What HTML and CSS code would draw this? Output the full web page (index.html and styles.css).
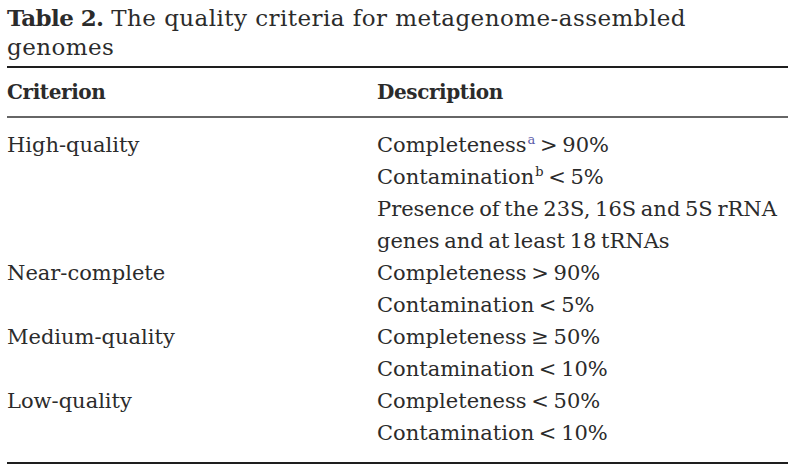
FILE: index.html
```html
<!DOCTYPE html>
<html lang="en">
<head>
<meta charset="utf-8">
<title>Table 2</title>
<link rel="stylesheet" href="styles.css">
</head>
<body>
<div class="table-wrap">
  <p class="caption"><b class="caption-label">Table 2.</b> The quality criteria for metagenome-assembled<br>genomes</p>
  <div class="table">
    <div class="head">
      <div class="cell">Criterion</div>
      <div class="cell">Description</div>
    </div>
    <div class="body">
      <div class="row">
        <div class="cell">High-quality</div>
        <div class="cell">
          <div class="line">Completeness<sup class="ref">a</sup> &gt; 90%</div>
          <div class="line">Contamination<sup class="ref ref-b">b</sup> &lt; 5%</div>
          <div class="line">Presence of the 23S, 16S and 5S rRNA</div>
          <div class="line">genes and at least 18 tRNAs</div>
        </div>
      </div>
      <div class="row">
        <div class="cell">Near-complete</div>
        <div class="cell">
          <div class="line">Completeness &gt; 90%</div>
          <div class="line">Contamination &lt; 5%</div>
        </div>
      </div>
      <div class="row">
        <div class="cell">Medium-quality</div>
        <div class="cell">
          <div class="line">Completeness &ge; 50%</div>
          <div class="line">Contamination &lt; 10%</div>
        </div>
      </div>
      <div class="row">
        <div class="cell">Low-quality</div>
        <div class="cell">
          <div class="line">Completeness &lt; 50%</div>
          <div class="line">Contamination &lt; 10%</div>
        </div>
      </div>
    </div>
  </div>
</div>
</body>
</html>
```

FILE: styles.css
```css
html, body {
  margin: 0;
  padding: 0;
  background: #ffffff;
}

body {
  font-family: "DejaVu Serif", "Liberation Serif", serif;
  color: #2b2b2b;
}

.table-wrap {
  width: 781px;
  padding: 3px 0 0 7px;
}

.caption {
  margin: 0 0 4px 0;
  font-size: 23px;
  letter-spacing: 0.45px;
  line-height: 29px;
}

.caption-label {
  font-weight: 700;
  letter-spacing: -0.6px;
}

.table {
  border-top: 2px solid #1e1e1e;
  border-bottom: 2px solid #1e1e1e;
}

.head {
  display: grid;
  grid-template-columns: 370px 1fr;
  padding: 8px 0 8px 0;
  border-bottom: 2px solid #666666;
  font-size: 20px;
  letter-spacing: -0.4px;
  line-height: 32px;
  font-weight: 700;
}

.body {
  padding: 11px 0 13px 0;
  font-size: 21px;
  line-height: 32px;
}

.row {
  display: grid;
  grid-template-columns: 370px 1fr;
}

.line {
  white-space: nowrap;
  word-spacing: -2px;
}

.ref {
  font-size: 13px;
  line-height: 0;
  vertical-align: 8px;
  color: #5b5ba8;
  margin-left: 1px;
}

.ref-b {
  color: #2b2b2b;
}
```
